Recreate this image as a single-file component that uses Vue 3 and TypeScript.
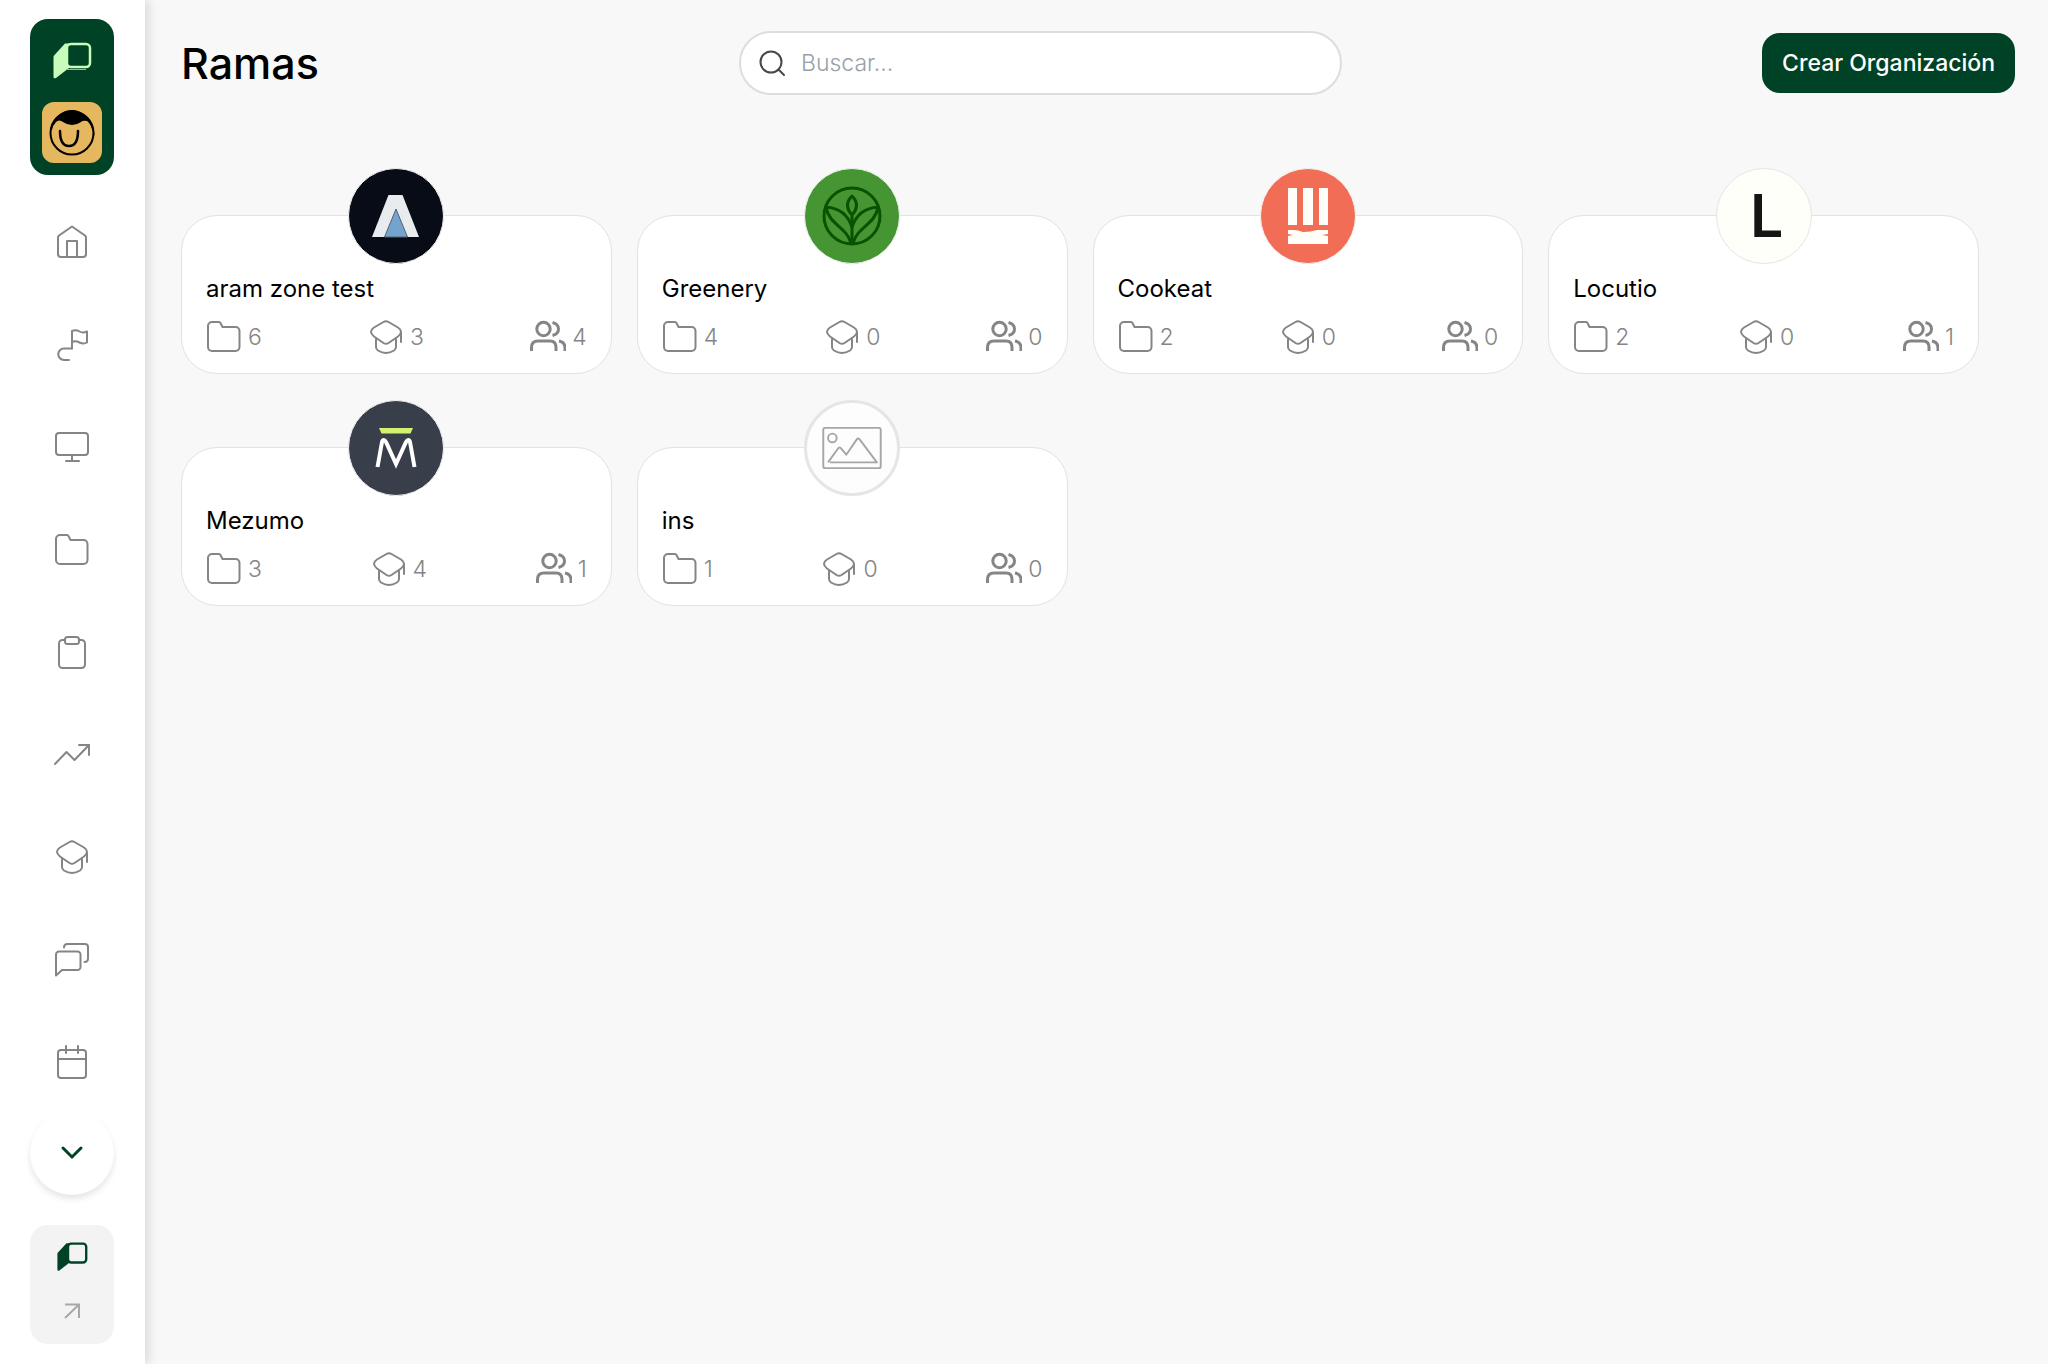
<script setup lang="ts">
import { ref, computed } from 'vue'

interface NavItem {
  label: string
  paths: string[]
}

interface Branch {
  name: string
  logo: string
  folders: number
  courses: number
  members: number
}

const folderPath = 'M2 7a4 4 0 0 1 4-4h7q1 0 1.500 1l2 4h13a4 4 0 0 1 4 4v16a4 4 0 0 1-4 4H6a4 4 0 0 1-4-4z'
const capPaths = [
  'M15.500 3q2.500-1.500 5 0l9.500 5.500q6 4 0 9L20.500 24q-2.500 1.500-5 0L6 17.500q-6-5 0-9z',
  'M8 20v8q0 2 2 3.500q8 5 16 0q2-1.500 2-3.500v-8',
  'M33 14v9',
]

const navItems: NavItem[] = [
  {
    label: 'Inicio',
    paths: [
      'M4 13.500q0-1 1-2L18 2.500l13 9q1 1 1 2V30a3 3 0 0 1-3 3H7a3 3 0 0 1-3-3z',
      'M13 33V17h10v16',
    ],
  },
  {
    label: 'Rutas',
    paths: [
      'M18 21.500V4q4-1.500 7.500.5t7.500 0v11q-3.500 2-7.500 0t-7.500-.5',
      'M18 21.500H10a5.700 5.700 0 0 0 0 11.500h5',
    ],
  },
  { label: 'Pantallas', paths: ['M5 4h26a3 3 0 0 1 3 3v16a3 3 0 0 1-3 3H5a3 3 0 0 1-3-3V7a3 3 0 0 1 3-3z', 'M18 26v6M12 32h13'] },
  { label: 'Carpetas', paths: [folderPath] },
  {
    label: 'Tareas',
    paths: [
      'M11 6H8.500a3.500 3.500 0 0 0-3.500 3.500v21A3.500 3.500 0 0 0 8.500 34h19a3.500 3.500 0 0 0 3.500-3.500v-21A3.500 3.500 0 0 0 27.500 6H25',
      'M13.500 3h9a2.500 2.500 0 0 1 2.500 2.500v2a2.500 2.500 0 0 1-2.500 2.500h-9A2.500 2.500 0 0 1 11 7.500v-2A2.500 2.500 0 0 1 13.500 3z',
    ],
  },
  { label: 'Informes', paths: ['M1 28L12.500 16l8 8L35 9', 'M25 9h10v10'] },
  { label: 'Cursos', paths: capPaths },
  {
    label: 'Mensajes',
    paths: [
      'M2 34.500V13.500a3 3 0 0 1 3-3h18.500a3 3 0 0 1 3 3V26a3 3 0 0 1-3 3H8z',
      'M10 6.500q0-3.500 3.500-3.500H31a3 3 0 0 1 3 3v11.500q0 3.500-3.500 3.500',
    ],
  },
  {
    label: 'Calendario',
    paths: ['M7 6h22a3 3 0 0 1 3 3v22a3 3 0 0 1-3 3H7a3 3 0 0 1-3-3V9a3 3 0 0 1 3-3z', 'M4 15h28M12 2v7M24 2v7'],
  },
]

const branches: Branch[] = [
  { name: 'aram zone test', logo: 'aram', folders: 6, courses: 3, members: 4 },
  { name: 'Greenery', logo: 'greenery', folders: 4, courses: 0, members: 0 },
  { name: 'Cookeat', logo: 'cookeat', folders: 2, courses: 0, members: 0 },
  { name: 'Locutio', logo: 'locutio', folders: 2, courses: 0, members: 1 },
  { name: 'Mezumo', logo: 'mezumo', folders: 3, courses: 4, members: 1 },
  { name: 'ins', logo: 'empty', folders: 1, courses: 0, members: 0 },
]

const query = ref('')
const visibleBranches = computed(() =>
  branches.filter((b) => b.name.toLowerCase().includes(query.value.trim().toLowerCase())),
)
</script>

<template>
  <div class="layout">
    <aside class="sidebar">
      <div class="brand">
        <svg class="brand-logo" viewBox="0 0 40 38" aria-hidden="true">
          <path d="M1.500 15q0-1 1-2L13 1.500h4V26L4 36q-2.500 1-2.500-1z" fill="#c9fcbb" />
          <rect x="15" y="2" width="23" height="23" rx="4" fill="#004225" stroke="#c9fcbb" stroke-width="2.500" />
          <path d="M14 27.500h20" stroke="#8fc093" stroke-width="1" />
        </svg>
        <button class="avatar" type="button" aria-label="Perfil">
          <svg viewBox="0 0 60 60" aria-hidden="true">
            <circle cx="30" cy="30" r="21.500" fill="none" stroke="#000" stroke-width="2" />
            <path d="M9 27C11 14 20 7 30 7s20 8 22 20l.5 6-2.500-7q-2-6-5-8-4-1-6 1-4 3-9 3t-9-3q-4-3-7 0-3 3-4 8z" fill="#000" />
            <path d="M18 28q0 15 9 15t9-15" fill="none" stroke="#000" stroke-width="2.500" stroke-linecap="round" />
          </svg>
        </button>
      </div>

      <nav class="nav" aria-label="Principal">
        <a v-for="item in navItems" :key="item.label" href="#" class="nav-link" :aria-label="item.label">
          <svg class="icon" viewBox="0 0 36 36" aria-hidden="true">
            <path v-for="d in item.paths" :key="d" :d="d" />
          </svg>
        </a>
      </nav>

      <button class="more" type="button" aria-label="Ver más">
        <svg viewBox="0 0 24 14" aria-hidden="true"><path d="M3 2l9 9 9-9" /></svg>
      </button>

      <a class="portal" href="#" aria-label="Abrir portal">
        <svg class="portal-logo" viewBox="0 0 40 38" aria-hidden="true">
          <path d="M1.500 15q0-1 1-2L13 1.500h4V26L4 36q-2.500 1-2.500-1z" fill="#004225" />
          <rect x="15" y="2" width="23" height="24" rx="4" fill="#f3f3f3" stroke="#004225" stroke-width="3" />
        </svg>
        <svg class="portal-arrow" viewBox="0 0 16 16" aria-hidden="true"><path d="M1 1.500h14V15M15 1.500L1 15" /></svg>
      </a>
    </aside>

    <main class="main">
      <header class="header">
        <h1 class="title">Ramas</h1>
        <label class="search">
          <svg viewBox="0 0 28 28" aria-hidden="true"><circle cx="12" cy="13" r="10.500" /><path d="M19.500 20.500L25 26" /></svg>
          <input v-model="query" type="text" placeholder="Buscar..." aria-label="Buscar" />
        </label>
        <button class="create" type="button">Crear Organización</button>
      </header>

      <section class="grid">
        <article v-for="b in visibleBranches" :key="b.name" class="card">
          <div class="logo" :class="b.logo">
            <svg viewBox="0 0 94 94" aria-hidden="true">
              <template v-if="b.logo === 'aram'">
                <path d="M39.500 26h14L70 68H23z" fill="#e9ecee" />
                <path d="M47 40L58.500 68h-23z" fill="#75a3cf" stroke="#56606b" stroke-width="1" />
              </template>
              <g v-else-if="b.logo === 'greenery'" fill="none" stroke="#075300" stroke-width="3" stroke-linejoin="round">
                <circle cx="47" cy="47" r="28" />
                <path d="M47 27q-9 9 0 19q9-10 0-19zM47 46v29" />
                <path d="M21 38C34 39 43 46 47 58C51 46 60 39 73 38" />
                <path d="M21 38C24 56 41 57 46 74M73 38C70 56 53 57 48 74" />
              </g>
              <g v-else-if="b.logo === 'cookeat'" fill="#fffdf8">
                <path d="M27 19h9v37h-9zM42 19h10v37H42zM58 19h9v37h-9z" />
                <path d="M27 61h6q4 0 9 2 8 0 14-2h11v4l-6 1 6 1v8H27v-8l5-1-5-1z" />
              </g>
              <text v-else-if="b.logo === 'locutio'" x="33" y="68">L</text>
              <template v-else-if="b.logo === 'mezumo'">
                <path d="M30 27h34l-2.500 5.500h-29z" fill="#d3f26d" />
                <path
                  d="M28.500 66L33 41q1.500-4 4 0L47 63l10-22q2.500-4 4 0l4.500 25"
                  fill="none"
                  stroke="#fff"
                  stroke-width="4"
                />
              </template>
              <g v-else fill="none" stroke="#a6a6a6" stroke-width="2" stroke-linejoin="round">
                <rect x="17" y="26" width="60" height="42" rx="2" />
                <circle cx="26.500" cy="36.500" r="4.500" />
                <path d="M22 62l10-14q2-3 4 0l5 6 11-16q1-2 3 0l18 24H24" />
              </g>
            </svg>
          </div>
          <h2 class="name">{{ b.name }}</h2>
          <div class="stats">
            <span class="stat">
              <svg class="icon" viewBox="0 0 36 36" aria-hidden="true"><path :d="folderPath" /></svg>{{ b.folders }}
            </span>
            <span class="stat">
              <svg class="icon" viewBox="0 0 36 36" aria-hidden="true"><path v-for="d in capPaths" :key="d" :d="d" /></svg>{{ b.courses }}
            </span>
            <span class="stat">
              <svg class="icon users" viewBox="0 0 36 36" aria-hidden="true">
                <circle cx="13.500" cy="10" r="6.700" />
                <path d="M1.500 32v-3.500q0-6.500 6.500-6.500h12q6 0 6 6.500V32M22.500 3.500q6 1.500 6 6.500t-6 6.500M29 22q6 1 6 7v3" />
              </svg>{{ b.members }}
            </span>
          </div>
        </article>
      </section>
    </main>
  </div>
</template>

<style>
body {
  margin: 0;
  background: #f8f8f8;
}
</style>

<style scoped>
.layout {
  display: flex;
  min-height: 100vh;
  font-family: Inter, "Liberation Sans", sans-serif;
  color: #000;
}

button {
  font: inherit;
  border: 0;
  padding: 0;
  cursor: pointer;
}

.sidebar {
  position: sticky;
  top: 0;
  box-sizing: border-box;
  width: 145px;
  height: 100vh;
  flex: none;
  display: flex;
  flex-direction: column;
  padding: 19px 31px 20px 30px;
  background: #fff;
  box-shadow: 4px 0 10px rgba(0, 0, 0, 0.12);
}

.brand {
  display: flex;
  flex-direction: column;
  align-items: center;
  gap: 22px;
  padding: 23px 0 12px;
  border-radius: 18px;
  background: #004225;
}

.brand-logo {
  width: 40px;
  height: 38px;
}

.avatar {
  width: 60px;
  height: 61px;
  border-radius: 12px;
  background: #e5b860;
}

.avatar svg {
  display: block;
}

.nav {
  flex: 1;
  display: flex;
  flex-direction: column;
  margin: 16px 0 -2px;
}

.nav-link {
  flex: 1;
  display: flex;
  align-items: center;
  justify-content: center;
}

.icon {
  width: 36px;
  height: 36px;
  fill: none;
  stroke: #858585;
  stroke-width: 2;
  stroke-linecap: round;
  stroke-linejoin: round;
}

.more {
  display: flex;
  align-items: center;
  justify-content: center;
  height: 84px;
  border-radius: 50%;
  background: #fff;
  box-shadow: 0 4px 6px rgba(0, 0, 0, 0.1);
}

.more svg {
  width: 24px;
  height: 14px;
  fill: none;
  stroke: #004225;
  stroke-width: 3;
  stroke-linecap: round;
}

.portal {
  display: flex;
  flex-direction: column;
  align-items: center;
  gap: 31px;
  margin-top: 30px;
  padding: 17px 0 25px;
  border-radius: 18px;
  background: #f3f3f3;
}

.portal-logo {
  width: 32px;
  height: 30px;
}

.portal-arrow {
  width: 16px;
  height: 16px;
  fill: none;
  stroke: #a8a8a8;
  stroke-width: 2;
}

.main {
  flex: 1;
  min-width: 0;
  padding: 31px 33px 31px 36px;
}

.header {
  display: flex;
  align-items: center;
  justify-content: space-between;
  gap: 24px;
}

.title {
  margin: 0;
  font-size: 43px;
  line-height: 60px;
  font-weight: 500;
}

.search {
  flex: 0 1 603px;
  box-sizing: border-box;
  height: 64px;
  display: flex;
  align-items: center;
  gap: 14px;
  padding: 0 18px;
  border: 2px solid #dddde1;
  border-radius: 32px;
  background: #fff;
}

.search svg {
  flex: none;
  width: 28px;
  height: 28px;
  fill: none;
  stroke: #45474a;
  stroke-width: 2;
  stroke-linecap: round;
}

.search input {
  flex: 1;
  min-width: 0;
  border: 0;
  padding: 0;
  outline: 0;
  background: none;
  font: 300 23px/32px Inter, "Liberation Sans", sans-serif;
  color: #222;
}

.search input::placeholder {
  color: #999fa8;
  opacity: 1;
}

.create {
  height: 60px;
  padding: 0 20px;
  border-radius: 18px;
  background: #004225;
  color: #fff;
  font-size: 23px;
  font-weight: 500;
  white-space: nowrap;
}

.grid {
  display: grid;
  grid-template-columns: repeat(4, minmax(0, 1fr));
  gap: 73px 25px;
  margin: 120px 36px 0 0;
}

.card {
  position: relative;
  padding: 57px 24px 18px;
  border: 1px solid #e2e2e2;
  border-radius: 36px;
  background: #fff;
}

.logo {
  position: absolute;
  top: 0;
  left: 50%;
  box-sizing: border-box;
  width: 96px;
  height: 96px;
  border: 1px solid #f3f3f3;
  border-radius: 50%;
  overflow: hidden;
  transform: translate(-50%, -50%);
}

.logo svg {
  display: block;
}

.aram {
  background: #080c16;
}

.greenery {
  background: #459632;
}

.cookeat {
  background: #f26d55;
}

.locutio {
  border-color: #e5e5e5;
  background: #fefff8;
}

.locutio text {
  font-size: 59px;
  font-weight: 600;
  fill: #141514;
}

.mezumo {
  background: #383f4a;
}

.empty {
  border: 3px solid #e5e5e5;
  background: #fdfdfd;
}

.name {
  margin: 0;
  font-size: 24px;
  line-height: 32px;
  font-weight: 400;
}

.stats {
  display: flex;
  justify-content: space-between;
  margin-top: 14px;
}

.stat {
  display: flex;
  align-items: center;
  gap: 6px;
  font-size: 23px;
  line-height: 36px;
  font-weight: 300;
  color: #858585;
}

.users {
  stroke-width: 3;
  stroke-linecap: butt;
}
</style>
